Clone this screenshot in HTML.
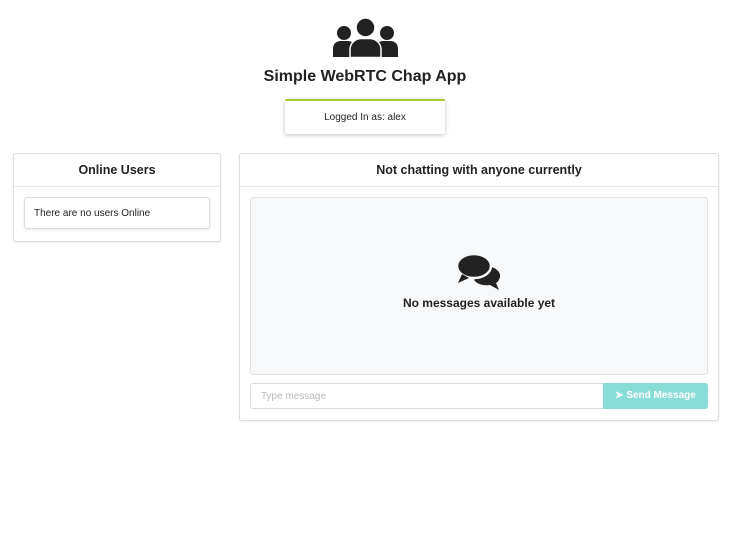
<!DOCTYPE html>
<html><head><style>
body{margin:0;width:730px;height:543px;background:#fff;font-family:"Liberation Sans",sans-serif;color:#222;position:relative;overflow:hidden}
.abs{position:absolute}
.card{position:absolute;background:#fff;border:1px solid #dcdcdc;border-radius:3px;box-shadow:0 1px 2px rgba(0,0,0,.08)}
.hdr{position:absolute;left:0;right:0;top:0;height:32px;border-bottom:1px solid #e6e6e6;text-align:center;line-height:32px;font-weight:bold;font-size:12.5px}
</style></head><body>
<svg class="abs" style="left:333px;top:18px" width="65" height="39" viewBox="0 0 65 39">
<circle cx="11" cy="15" r="7" fill="#222"/>
<path d="M0 39v-8c0-5 3-8 8-8h7c4 0 7 3 7 8v8z" fill="#222"/>
<circle cx="54" cy="15" r="7" fill="#222"/>
<path d="M65 39v-8c0-5-3-8-8-8h-7c-4 0-7 3-7 8v8z" fill="#222"/>
<circle cx="32.5" cy="9.5" r="9.5" fill="#222" stroke="#fff" stroke-width="1.5"/>
<path d="M17 39.5v-8c0-6 5-11 11-11h9c6 0 11 5 11 11v8z" fill="#222" stroke="#fff" stroke-width="1.5"/>
</svg>
<div class="abs" style="left:0;width:730px;top:68px;text-align:center;font-size:16px;font-weight:bold">Simple WebRTC Chap App</div>
<div class="abs" style="left:285px;top:99px;width:160px;height:33px;border-top:2px solid #a8c93a;box-shadow:0 1px 4px rgba(0,0,0,.25);border-radius:2px;text-align:center;line-height:33px;font-size:10px">Logged In as: alex</div>
<div class="card" style="left:13px;top:153px;width:206px;height:87px">
<div class="hdr">Online Users</div>
<div class="abs" style="left:10px;top:43px;height:32px;border:1px solid #dcdcdc;border-radius:3px;box-shadow:0 1px 2px rgba(0,0,0,.1);line-height:32px;font-size:10px;padding-left:9px;box-sizing:border-box;width:186px">There are no users Online</div>
</div>
<div class="card" style="left:239px;top:153px;width:478px;height:266px">
<div class="hdr">Not chatting with anyone currently</div>
<div class="abs" style="left:10px;top:43px;width:456px;height:176px;background:#f7f8f9;border:1px solid #e2e2e2;border-radius:3px">
<svg class="abs" style="left:206px;top:55px" width="46" height="37" viewBox="0 0 46 37">
<path d="M32 13c7 2 12 6 11 11-1 3-2 5-4 6l3 7-9-5c-7 1-13-1-16-5z" fill="#222"/>
<ellipse cx="17" cy="13" rx="17" ry="12" fill="#222" stroke="#f7f8f9" stroke-width="2.5"/>
<path d="M5 21l-4 9 11-5z" fill="#222"/>
</svg>
<div class="abs" style="left:0;right:0;top:98px;text-align:center;font-weight:bold;font-size:12px">No messages available yet</div>
</div>
<div class="abs" style="left:10px;top:229px;height:26px;border:1px solid #dcdcdc;border-right:none;border-radius:3px 0 0 3px;font-size:10px;color:#bbb;line-height:26px;padding-left:10px;box-sizing:border-box;width:353px">Type message</div>
<div class="abs" style="left:363px;top:229px;width:105px;height:26px;background:#8adcd6;border-radius:0 3px 3px 0;color:#fff;font-size:10px;font-weight:bold;line-height:26px;text-align:center">&#10148; Send Message</div>
</div>
</body></html>
